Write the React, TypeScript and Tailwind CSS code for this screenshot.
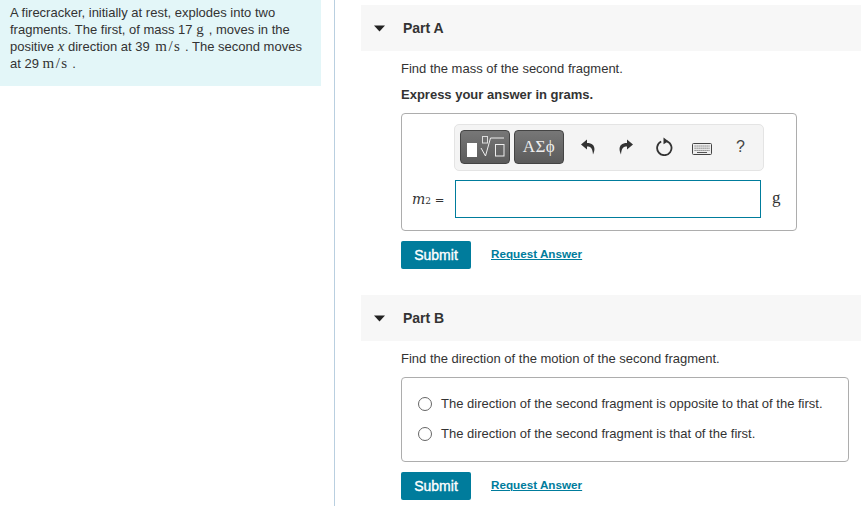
import React from "react";

const Caret = () => (
  <svg width="11" height="7" viewBox="0 0 11 7" className="block">
    <path d="M0 0.5H11L5.5 6.5Z" fill="#222" />
  </svg>
);

const PartHeader = ({ label }: { label: string }) => (
  <div className="flex items-center h-[46px] bg-[#f7f7f7] pl-[13px]">
    <Caret />
    <span className="ml-[18px] text-[14px] font-bold text-[#333]">{label}</span>
  </div>
);

const Actions = () => (
  <div className="flex items-center">
    <button className="w-[70px] h-[28px] rounded-[2px] bg-[#007c9c] text-white text-[14px] [-webkit-text-stroke:0.35px_white]">Submit</button>
    <a className="ml-[20px] -mt-[2px] text-[11.7px] font-bold text-[#007c9c] underline">Request Answer</a>
  </div>
);

const M = ({ children }: { children: React.ReactNode }) => (
  <span className="font-['Liberation_Serif',serif] text-[15px] leading-[0] tracking-[1.5px]">{children}</span>
);

const Radio = ({ text }: { text: string }) => (
  <div className="flex items-center h-[30px]">
    <span className="w-[14px] h-[14px] rounded-full border border-[#666] bg-white" />
    <span className="ml-[9px] text-[13px] text-[#333]">{text}</span>
  </div>
);

const Tool = ({ children }: { children: React.ReactNode }) => (
  <div className="w-[38px] h-[34px] flex justify-center items-center">{children}</div>
);

export default function App() {
  return (
    <div className="flex h-[506px] w-[861px] overflow-hidden bg-white font-['Liberation_Sans',Arial,sans-serif] text-[#333]">
      <div className="w-[335px] shrink-0 border-r border-[#b9cfe0]">
        <div className="w-[321px] h-[86px] bg-[#e3f6f8] pl-[10px] pr-[10px] pt-[4px] text-[13px] leading-[17px] text-[#333]">
          A firecracker, initially at rest, explodes into two fragments. The first, of mass 17 <M>g</M> , moves in the positive{" "}
          <span className="font-['Liberation_Serif',serif] italic text-[15px] leading-[0]">x</span> direction at 39 <span className="ml-[2px]"><M>m/s</M></span> . The second moves at 29 <M>m/s</M> .
        </div>
      </div>

      <div className="flex-1 pl-[26px] pt-[5px]">
        <PartHeader label="Part A" />
        <div className="pl-[40px] pr-[64px]">
          <p className="mt-[10px] text-[13px] leading-[15px]">Find the mass of the second fragment.</p>
          <p className="mt-[11px] text-[13px] leading-[15px] font-bold">Express your answer in grams.</p>

          <div className="mt-[11px] h-[118px] rounded-[4px] border border-[#adadad] pl-[52px] pr-[10px] pt-[10px]">
            <div className="w-[310px] h-[47px] rounded-[5px] border border-[#e4e4e4] bg-[#f4f4f4] flex items-start pl-[5px] pt-[5px]">
              <div className="w-[50px] h-[34px] rounded-[4px] border border-[#444] bg-gradient-to-b from-[#777] to-[#5b5b5b] overflow-hidden">
                <svg width="48" height="32" viewBox="0 0 48 32" className="block">
                  <rect x="6" y="12" width="10" height="14" fill="#fff" />
                  <rect x="21.5" y="5.5" width="5" height="6.5" fill="none" stroke="#ddd" />
                  <path d="M20 17l4.5 8 5-18H43" fill="none" stroke="#eee" />
                  <rect x="34.5" y="13.5" width="8.5" height="11.5" fill="none" stroke="#eee" />
                </svg>
              </div>
              <div className="ml-[4px] w-[50px] h-[34px] rounded-[4px] border border-[#444] bg-gradient-to-b from-[#777] to-[#5b5b5b] flex items-center justify-center font-['Liberation_Serif',serif] text-[17px] tracking-[0.5px] text-[#eee]">
                ΑΣϕ
              </div>
              <div className="ml-[5px] flex items-center">
                <Tool>
                  <svg width="14" height="16" viewBox="0 0 14 16"><path d="M6 0.5L0 5.5l6 5V7.5c3.5 0 5.5 1.5 6 8 3-6 1.5-11.5-6-11.5Z" fill="#333" /></svg>
                </Tool>
                <Tool>
                  <svg width="14" height="16" viewBox="0 0 14 16"><path d="M8 0.5l6 5-6 5V7.5c-3.5 0-5.5 1.5-6 8-3-6-1.5-11.5 6-11.5Z" fill="#333" /></svg>
                </Tool>
                <Tool>
                  <svg width="17" height="19" viewBox="0 0 17 19" className="-mt-[1px]"><path d="M5.2 4.5A7.2 7.2 0 1 0 11 4.3" fill="none" stroke="#333" strokeWidth="1.8" /><path d="M7.5 0.5l5 3.8-5 3Z" fill="#333" /></svg>
                </Tool>
                <Tool>
                  <svg width="20" height="12" viewBox="0 0 20 12" className="mt-[3px]"><rect x="0.5" y="0.5" width="19" height="11" rx="1" fill="#eee" stroke="#444" /><path d="M2.5 3h15M2.5 5.2h15M2.5 7.4h15" stroke="#666" strokeDasharray="1.2 .8" /><path d="M5 9.5h10" stroke="#555" /></svg>
                </Tool>
                <Tool><span className="ml-[1px] text-[16px] text-[#444]">?</span></Tool>
              </div>
            </div>
            <div className="flex items-center mt-[9px] -ml-[42px]">
              <span className="w-[32px] font-['DejaVu_Serif',serif] text-[11.5px] text-[#333] whitespace-nowrap leading-none"><i className="text-[14px]">m</i><span className="text-[9px]">2</span> =</span>
              <div className="ml-[11px] w-[306px] h-[38px] border border-[#007c9c] bg-white" />
              <span className="ml-[11px] -mt-[2px] font-['Liberation_Serif',serif] text-[17px]">g</span>
            </div>
          </div>

          <div className="mt-[10px]"><Actions /></div>
        </div>

        <div className="mt-[26px]"><PartHeader label="Part B" /></div>
        <div className="pl-[40px]">
          <p className="mt-[10px] text-[13px] leading-[15px]">Find the direction of the motion of the second fragment.</p>
          <div className="mt-[11px] w-[448px] h-[85px] rounded-[4px] border border-[#adadad] pl-[16px] pt-[11px]">
            <Radio text="The direction of the second fragment is opposite to that of the first." />
            <Radio text="The direction of the second fragment is that of the first." />
          </div>
          <div className="mt-[10px]"><Actions /></div>
        </div>
      </div>
    </div>
  );
}
